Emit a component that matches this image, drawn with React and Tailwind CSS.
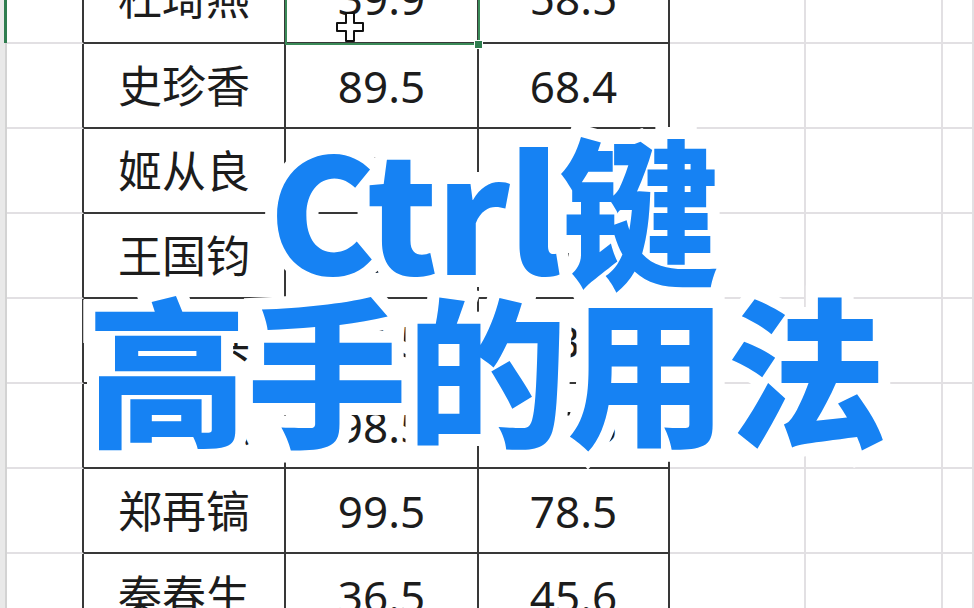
import React from 'react';

const rows = [
  ['杜琦燕', '39.9', '58.5'],
  ['史珍香', '89.5', '68.4'],
  ['姬从良', '39.5', '69.5'],
  ['王国钧', '55.5', '65.5'],
  ['沈京兵', '90.5', '63.5'],
  ['杨过瘾', '98.5', '65.5'],
  ['郑再镐', '99.5', '78.5'],
  ['秦春生', '36.5', '45.6'],
];

const light = 'border-r-2 border-b-2 border-[#e2e0e3]';
const dark = 'border-r-2 border-b-2 border-[#383838]';

const Cell = ({ w, children }) => (
  <div className={`${w} ${dark} flex items-center justify-center`}>{children}</div>
);

const App = () => {
  return (
    <div className="relative w-[974px] h-[608px] overflow-hidden bg-white text-[44px] text-[#1c1c1c] [font-family:'Noto_Sans','Noto_Sans_CJK_SC',sans-serif]">
      {/* sheet grid */}
      <div className="-mt-[46px] flex flex-col">
        {rows.map((r, i) => (
          <div key={i} className={`flex ${i === 0 ? 'h-[90px]' : 'h-[85px]'}`}>
            <div className="w-[7px] shrink-0 bg-[#e9e9e9] border-r-2 border-[#d3d3d3]" />
            <div className="w-[77px] shrink-0 border-b-2 border-[#e2e0e3] border-r-2 border-r-[#383838]" />
            <Cell w="w-[202px] shrink-0">{r[0]}</Cell>
            <Cell w="w-[193px] shrink-0">{r[1]}</Cell>
            <Cell w="w-[191px] shrink-0">{r[2]}</Cell>
            <div className={`w-[136px] shrink-0 ${light}`} />
            <div className={`w-[137px] shrink-0 ${light}`} />
            <div className={`flex-1 ${light}`} />
          </div>
        ))}
      </div>

      {/* selected row marker */}
      <div className="absolute left-[4px] top-0 w-[3px] h-[43px] bg-[#2f7d4f]" />

      {/* active cell */}
      <div className="absolute left-[285px] top-[-10px] w-[195px] h-[55px] border-2 border-[#3a8a58]" />
      <div className="absolute left-[475px] top-[41px] w-[7px] h-[7px] bg-[#2f7d4f] ring-1 ring-white" />

      {/* cursor */}
      <svg className="absolute left-[336px] top-[12px]" width="28" height="30" viewBox="0 0 28 30">
        <path
          d="M10 1h8v10h9v8h-9v10h-8v-10h-9v-8h9z"
          fill="#fff"
          stroke="#111"
          strokeWidth="2"
          strokeLinejoin="round"
        />
      </svg>

      {/* title overlay */}
      <div className="absolute inset-x-0 top-[125px] text-center text-[160px] leading-[160px] font-black text-[#1682f3] [font-family:'Noto_Sans_CJK_SC',sans-serif] [-webkit-text-stroke:24px_white] [paint-order:stroke_fill]">
        <div className="pl-[12px] tracking-[-2px]">Ctrl键</div>
        <div>高手的用法</div>
      </div>
    </div>
  );
};

export default App;
